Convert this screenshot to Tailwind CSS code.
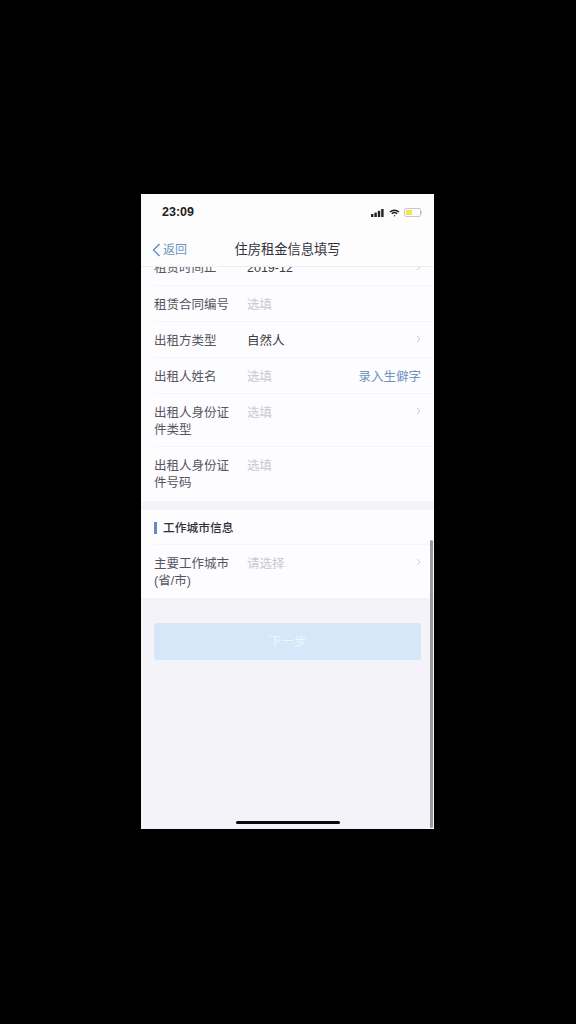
<!DOCTYPE html>
<html lang="zh-CN">
<head>
    <meta charset="UTF-8">
    <title>住房租金信息填写</title>
    <script src="https://cdn.jsdelivr.net/npm/@tailwindcss/browser@4"></script>
</head>
<body class="bg-black w-[576px] h-[1024px] overflow-hidden font-['Liberation_Sans','Noto_Sans_CJK_SC',sans-serif]">
    <div class="pt-[194px] pl-[141px]">
        <div class="relative w-[293px] h-[635px] bg-[#f3f3f9] overflow-hidden flex flex-col">
            <!-- status bar -->
            <div class="h-[37px] shrink-0 bg-[#fdfdfe] flex items-center justify-between pl-[21px] pr-[12px]">
                <span class="text-[12.5px] font-semibold text-[#222]">23:09</span>
                <div class="flex items-center gap-[4px]">
                    <svg width="14" height="8" viewBox="0 0 14 8" fill="#222"><rect x="0" y="5" width="2.4" height="3"/><rect x="3.4" y="3.6" width="2.4" height="4.4"/><rect x="6.8" y="1.8" width="2.4" height="6.2"/><rect x="10.2" y="0" width="2.4" height="8"/></svg>
                    <svg width="11" height="8" viewBox="0 0 11 8" fill="none" stroke="#222" stroke-width="1.4"><path d="M1 3a6.5 6.5 0 0 1 9 0"/><path d="M2.8 4.8a4 4 0 0 1 5.4 0"/><circle cx="5.5" cy="6.8" r="0.7" fill="#222" stroke="none"/></svg>
                    <div class="flex items-center">
                        <div class="w-[17px] h-[9px] rounded-[2px] border border-[#c8c8c8] p-[1px]"><div class="w-[6px] h-full bg-[#f5e34f]"></div></div>
                        <div class="w-[1px] h-[3px] bg-[#c8c8c8]"></div>
                    </div>
                </div>
            </div>

            <!-- nav -->
            <div class="relative h-[36px] shrink-0 bg-[#fdfdfe] border-b border-[#eeeef2] flex items-center justify-center pt-[3px] text-[13.25px] text-[#34343c] z-10">
                <div class="absolute left-[11px] top-[10px] flex items-center gap-[2px] text-[#6b94bf] text-[12px]">
                    <svg width="9" height="14" viewBox="0 0 9 14" fill="none" stroke="#5e8cbd" stroke-width="1.4"><path d="M7.5 1 1.5 7l6 6"/></svg>
                    <span>返回</span>
                </div>
                <span>住房租金信息填写</span>
            </div>

            <!-- form, scrolled -->
            <div class="flex-1 overflow-hidden">
                <div class="bg-[#fdfcfe] pl-[13px] text-[12.5px] leading-[17px] text-[#55555e]">
                    <div class="h-[19px] flex border-b border-[#f5f5f8] overflow-hidden pr-[13px]">
                        <div class="w-[93px] shrink-0 -mt-[7px]">租赁时间止</div>
                        <div class="flex-1 -mt-[7px] text-[#3a3a42]">2019-12</div>
                        <svg class="-mt-[4px]" width="5" height="8" viewBox="0 0 5 8" fill="none" stroke="#c9c9d0" stroke-width="1"><path d="m1 1 3 3-3 3"/></svg>
                    </div>
                    <div class="h-[36px] flex items-center pt-[4px] border-b border-[#f5f5f8]">
                        <div class="w-[93px] shrink-0">租赁合同编号</div>
                        <div class="text-[#c9c9d1]">选填</div>
                    </div>
                    <div class="h-[36px] flex items-center pt-[4px] border-b border-[#f5f5f8] pr-[13px]">
                        <div class="w-[93px] shrink-0">出租方类型</div>
                        <div class="flex-1 text-[#3a3a42]">自然人</div>
                        <svg class="-mt-[5px]" width="5" height="8" viewBox="0 0 5 8" fill="none" stroke="#c9c9d0" stroke-width="1"><path d="m1 1 3 3-3 3"/></svg>
                    </div>
                    <div class="h-[36px] flex items-center pt-[4px] border-b border-[#f5f5f8] pr-[13px]">
                        <div class="w-[93px] shrink-0">出租人姓名</div>
                        <div class="flex-1 text-[#c9c9d1]">选填</div>
                        <div class="text-[#6b94bf]">录入生僻字</div>
                    </div>
                    <div class="h-[53px] flex pt-[11px] border-b border-[#f5f5f8] pr-[13px]">
                        <div class="w-[93px] shrink-0 pr-[15px]">出租人身份证件类型</div>
                        <div class="flex-1 text-[#c9c9d1]">选填</div>
                        <svg class="mt-[2px]" width="5" height="8" viewBox="0 0 5 8" fill="none" stroke="#c9c9d0" stroke-width="1"><path d="m1 1 3 3-3 3"/></svg>
                    </div>
                    <div class="h-[54px] flex pt-[11px]">
                        <div class="w-[93px] shrink-0 pr-[15px]">出租人身份证件号码</div>
                        <div class="text-[#c9c9d1]">选填</div>
                    </div>
                </div>

                <div class="h-[9px] bg-[#f3f3f9]"></div>

                <div class="bg-[#fdfcfe] pl-[13px] text-[12.5px] leading-[17px] text-[#55555e]">
                    <div class="h-[35px] flex items-center gap-[6px] border-b border-[#f5f5f8] text-[#2f3036] text-[11.75px] font-medium">
                        <div class="w-[3px] h-[12px] bg-[#5a8ec4] mt-[1px]"></div>
                        <span>工作城市信息</span>
                    </div>
                    <div class="h-[53px] flex pt-[11px] pr-[13px]">
                        <div class="w-[93px] shrink-0 pr-[15px]">主要工作城市(省/市)</div>
                        <div class="flex-1 text-[#c9c9d1]">请选择</div>
                        <svg class="mt-[2px]" width="5" height="8" viewBox="0 0 5 8" fill="none" stroke="#c9c9d0" stroke-width="1"><path d="m1 1 3 3-3 3"/></svg>
                    </div>
                </div>

                <div class="mx-[13px] mt-[25px] h-[37px] pt-[2px] rounded-[3px] bg-[#d5e7f8] flex items-center justify-center text-[12.5px] text-[#eef5fc]">下一步</div>
            </div>

            <!-- scroll indicator and home bar -->
            <div class="absolute right-[1px] top-[346px] w-[3px] h-[288px] rounded-full bg-[#98989d]"></div>
            <div class="absolute left-[95px] bottom-[5px] w-[104px] h-[3px] rounded-full bg-[#0a0a0a]"></div>
        </div>
    </div>
</body>
</html>
